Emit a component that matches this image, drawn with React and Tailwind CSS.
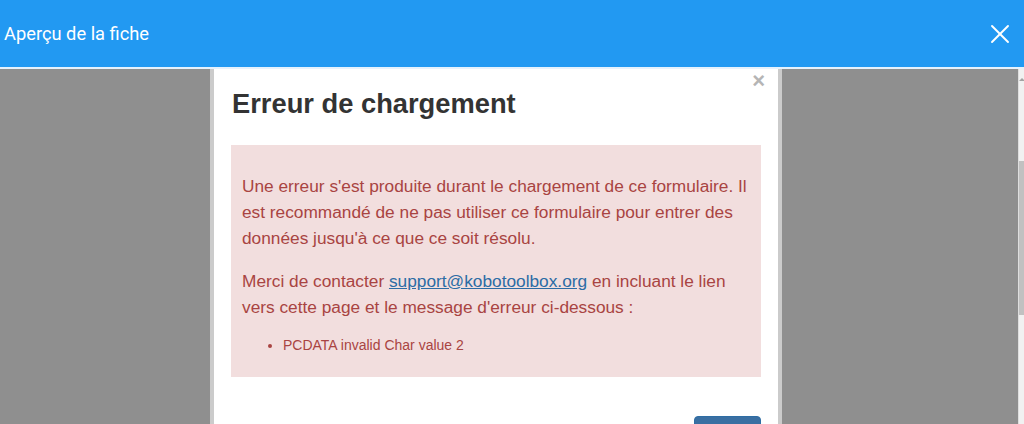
// Form preview modal showing an Enketo load error inside the iframe area.

import { X } from 'lucide-react'

function ErrorAlert() {
  return (
    <div className="bg-[#f2dede] text-[#a94442] pt-[28px] pb-[22px] px-[11px] text-[17.3px] leading-[26px]">
      <p className="mb-[17px]">
        Une erreur s'est produite durant le chargement de ce formulaire. Il est recommandé de ne pas utiliser ce formulaire
        pour entrer des données jusqu'à ce que ce soit résolu.
      </p>
      <p>
        Merci de contacter{' '}
        <a href="#" className="text-[#2c6ca5] underline">
          support@kobotoolbox.org
        </a>{' '}
        en incluant le lien vers cette page et le message d'erreur ci-dessous :
      </p>
      <ul className="list-disc pl-[41px] mt-[15px] text-[14px] leading-[20px]">
        <li>PCDATA invalid Char value 2</li>
      </ul>
    </div>
  )
}

function Scrollbar() {
  return (
    <div className="w-[6px] bg-[#f1f1f1] border-l border-[#dedede] flex flex-col items-center relative">
      <div className="mt-[9px] w-0 h-0 border-x-[3px] border-x-transparent border-b-[3px] border-b-[#a3a3a3]" />
      <div className="mt-[80px] w-full h-[154px] bg-[#c1c1c1]" />
    </div>
  )
}

export default function App() {
  return (
    <div className="h-[424px] w-[1024px] overflow-hidden flex flex-col font-['Liberation_Sans',Arial,sans-serif]">
      {/* Header */}
      <div className="h-[67px] bg-[#2299f2] flex items-center justify-between pl-[4px] pr-[8px] shrink-0">
        <span className="text-white text-[18.3px] font-['Roboto',sans-serif]">Aperçu de la fiche</span>
        <X size={32} strokeWidth={1.4} className="text-white" />
      </div>
      <div className="h-[2px] bg-[#e6f2fd] shrink-0" />

      {/* Preview area */}
      <div className="flex-1 flex min-h-0">
        <div className="flex-1 bg-[#8f8f8f] overflow-hidden">
          <div className="ml-[210px] w-[572px] h-full bg-white border-x-4 border-[#cbcbcb] relative px-[17px]">
            <span className="absolute right-[13px] top-[1px] text-[#b5b5b5] text-[22px] font-bold leading-none">×</span>
            <h4 className="pt-[20px] pl-[1px] text-[27.3px] leading-[29.7px] font-bold text-[#333]">Erreur de chargement</h4>
            <div className="mt-[26px]">
              <ErrorAlert />
            </div>
            <div className="flex justify-end mt-[39px]">
              <button className="w-[67px] h-[34px] bg-[#3a6fa2] border border-[#2e6da4] rounded-[4px]" />
            </div>
          </div>
        </div>
        <Scrollbar />
      </div>
    </div>
  )
}
